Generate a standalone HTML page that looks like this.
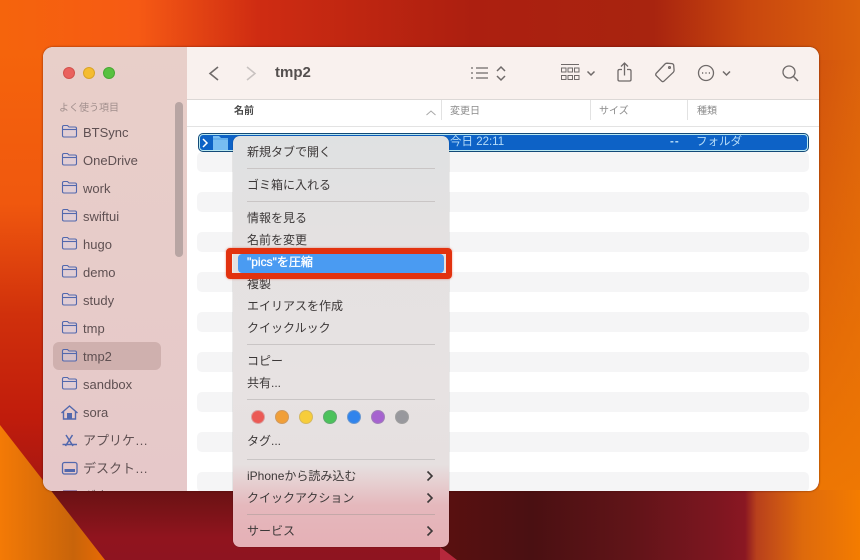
<!DOCTYPE html>
<html lang="ja"><head><meta charset="utf-8"><title>Finder</title>
<style>
*{box-sizing:border-box}
html,body{margin:0;padding:0}
body{width:860px;height:560px;position:relative;overflow:hidden;background:#a81e10;font-family:"Liberation Sans","Noto Sans CJK JP",sans-serif}
.a{position:absolute;white-space:nowrap}
#win{position:absolute;left:43px;top:47px;width:776px;height:444px;border-radius:10px;overflow:hidden;background:#fff;box-shadow:0 0 2px rgba(60,10,0,.6)}
#side{position:absolute;left:0;top:0;width:144px;height:444px;background:linear-gradient(#e8cfc9,#e6c8c9)}
.si{position:absolute;left:40px;font-size:13px;line-height:18px;color:#5f5052;white-space:nowrap}
.st{position:absolute;left:154px;width:612px;height:20px;background:#f5f5f6;border-radius:5px}
.h{position:absolute;top:58px;font-size:10px;line-height:14px;color:#8b8b8b;white-space:nowrap}
.hs{position:absolute;top:53px;width:1px;height:20px;background:#e2e2e2}
#menu{position:absolute;left:233px;top:136px;width:216px;height:411px;border-radius:7px;background:linear-gradient(#dfe1e2 0,#e4e1e1 25%,#e7e2e2 60%,#e6e0e0 80%,#e5b8bc 90%,#e5b0b6 100%);box-shadow:0 0 1px rgba(0,0,0,.45)}
.m{position:absolute;left:14px;font-size:12px;line-height:18px;color:#3c3838;white-space:nowrap}
.sep{position:absolute;left:14px;width:188px;height:1px;background:#c9c5c5}
.dot{position:absolute;top:274px;width:14px;height:14px;border-radius:50%}
.ar{position:absolute;left:193px;width:8px;height:12px}
</style></head><body>
<svg class="a" style="left:0;top:0" width="860" height="560" viewBox="0 0 860 560">
<defs>
<linearGradient id="b" x1="0" y1="0" x2="1" y2="0"><stop offset="0" stop-color="#f5640c"/><stop offset=".16" stop-color="#f65a14"/><stop offset=".3" stop-color="#cf2c12"/><stop offset=".55" stop-color="#ac1f10"/><stop offset=".76" stop-color="#a8240f"/><stop offset=".87" stop-color="#c9470e"/><stop offset="1" stop-color="#dc620c"/></linearGradient>
<linearGradient id="l" x1="0" y1="0" x2="0" y2="1"><stop offset="0" stop-color="#f5640c"/><stop offset=".3" stop-color="#f0580e"/><stop offset=".52" stop-color="#d0300c"/><stop offset=".72" stop-color="#c01c0c"/><stop offset="1" stop-color="#8a1218"/></linearGradient>
<linearGradient id="r" x1="0" y1="0" x2="1" y2="0"><stop offset="0" stop-color="#d2540d"/><stop offset="1" stop-color="#dc620c"/></linearGradient>
<linearGradient id="r2" x1="0" y1="0" x2="0" y2="1"><stop offset="0" stop-color="#f07a02" stop-opacity="0"/><stop offset="1" stop-color="#f07a02" stop-opacity=".9"/></linearGradient>
<linearGradient id="t" x1="0" y1="0" x2="1" y2="0"><stop offset="0" stop-color="#f47a06"/><stop offset=".7" stop-color="#c8640a"/><stop offset="1" stop-color="#e86a04"/></linearGradient>
<linearGradient id="o" x1="0" y1="0" x2="1" y2="0"><stop offset="0" stop-color="#8a1722"/><stop offset=".1" stop-color="#b8401c"/><stop offset=".5" stop-color="#de6a0c"/><stop offset="1" stop-color="#f47c00"/></linearGradient>
<linearGradient id="k" x1="0" y1="0" x2="1" y2="0"><stop offset="0" stop-color="#5a1010"/><stop offset=".3" stop-color="#4a1012"/><stop offset=".62" stop-color="#601418"/><stop offset=".9" stop-color="#7c1620"/><stop offset="1" stop-color="#8a1722"/></linearGradient>
<linearGradient id="q" x1="0" y1="0" x2="0" y2="1"><stop offset="0" stop-color="#651212"/><stop offset=".7" stop-color="#90141e"/><stop offset="1" stop-color="#8e1420"/></linearGradient>
</defs>
<rect width="860" height="60" fill="url(#b)"/>
<rect x="0" y="50" width="50" height="510" fill="url(#l)"/>
<rect x="50" y="485" width="400" height="75" fill="url(#q)"/>
<rect x="440" y="485" width="305" height="75" fill="url(#k)"/>
<rect x="745" y="485" width="115" height="75" fill="url(#o)"/>
<rect x="819" y="60" width="41" height="430" fill="url(#r)"/>
<rect x="819" y="60" width="41" height="430" fill="url(#r2)"/>
<polygon points="0,425 105,560 0,560" fill="url(#t)"/>
<polygon points="440,547 457,560 440,560" fill="#b5283c"/>
</svg>

<div id="win">
<div class="a" style="left:144px;top:0;width:632px;height:53px;background:#f9f1ee;border-bottom:1px solid #dcd8d6"></div>
<div class="a" style="left:144px;top:79px;width:632px;height:1px;background:#e3e3e3"></div>

<div id="side">
<div class="a" style="left:20px;top:20px;width:12px;height:12px;border-radius:50%;background:#ea615d;border:1px solid #d2524c"></div>
<div class="a" style="left:40px;top:20px;width:12px;height:12px;border-radius:50%;background:#f5bc2f;border:1px solid #d9a428"></div>
<div class="a" style="left:60px;top:20px;width:12px;height:12px;border-radius:50%;background:#58c13f;border:1px solid #49a834"></div>
<div class="a" style="left:16px;top:55px;font-size:10px;line-height:14px;color:#a08e8c">よく使う項目</div>
<div class="a" style="left:132px;top:55px;width:8px;height:155px;border-radius:4px;background:#b8a5a3"></div>
<div class="a" style="left:10px;top:295px;width:108px;height:28px;border-radius:6px;background:#cfb0ae"></div>

<svg class="a" style="left:0;top:0" width="144" height="444" fill="none" stroke="#5268ad" stroke-width="1.1">
<defs><g id="f"><path d="M19.500 88.500v-8.500q0-1.500 1.500-1.500h3.500l1.500 1.500h6q1.500 0 1.500 1.500v7q0 1.500-1.500 1.500h-11q-1.500 0-1.500-1.500z" fill="#dcd0e0" fill-opacity=".5"/><path d="M19.500 82.500h14.500"/></g></defs>
<use href="#f"/><use href="#f" y="28"/><use href="#f" y="56"/><use href="#f" y="84"/><use href="#f" y="112"/><use href="#f" y="140"/><use href="#f" y="168"/><use href="#f" y="196"/><use href="#f" y="224"/><use href="#f" y="252"/>
<path d="M18.500 366l8-7 8 7M20.500 364.500v7.500h12v-7.500" stroke-width="1.400"/><rect x="24" y="366" width="5" height="6" fill="#5268ad" stroke="none"/>
<path d="M23 388l7 11M29.500 388l-7 11M19.500 397.500h14.500" stroke-width="1.500"/>
<rect x="19.500" y="415.500" width="14.500" height="11.500" rx="2" stroke-width="1.300"/><rect x="21.500" y="422" width="10.500" height="3" fill="#5268ad" stroke="none"/>
<rect x="20" y="443" width="14" height="6" fill="#9b7fa5" stroke="none"/>
</svg>

<div class="si" style="top:77px">BTSync</div>
<div class="si" style="top:105px">OneDrive</div>
<div class="si" style="top:133px">work</div>
<div class="si" style="top:161px">swiftui</div>
<div class="si" style="top:189px">hugo</div>
<div class="si" style="top:217px">demo</div>
<div class="si" style="top:245px">study</div>
<div class="si" style="top:273px">tmp</div>
<div class="si" style="top:301px">tmp2</div>
<div class="si" style="top:329px">sandbox</div>
<div class="si" style="top:357px">sora</div>
<div class="si" style="top:385px">アプリケ…</div>
<div class="si" style="top:413px">デスクト…</div>
<div class="si" style="top:441px">ダウ…</div>
</div>

<div class="a" style="left:232px;top:16px;font-size:15px;line-height:20px;font-weight:bold;color:#544f4e">tmp2</div>

<svg class="a" style="left:144px;top:0" width="632" height="53" fill="none" stroke="#6f6a69" stroke-width="1.300">
<path d="M31 20l-8 6.500 8 6.500" stroke-width="1.600"/>
<path d="M60 20l8 6.500-8 6.500" stroke="#c8c2c0" stroke-width="1.500"/>
<path d="M289 21h12M289 26h12M289 31h12"/>
<path d="M284 21h2M284 26h2M284 31h2"/>
<path d="M310 24l4-4 4 4M310 29l4 4 4-4" stroke-width="1.500"/>
<path d="M374 17.500h18" stroke-width="1"/>
<rect x="374.500" y="21" width="4.500" height="4" stroke-width="1"/><rect x="381" y="21" width="4.500" height="4" stroke-width="1"/><rect x="387.500" y="21" width="4.500" height="4" stroke-width="1"/>
<rect x="374.500" y="28.500" width="4.500" height="4" stroke-width="1"/><rect x="381" y="28.500" width="4.500" height="4" stroke-width="1"/><rect x="387.500" y="28.500" width="4.500" height="4" stroke-width="1"/>
<path d="M400.500 24.500l3.500 3.500 3.500-3.500" stroke-width="1.500"/>
<path d="M435 22.500h-2.500q-1.500 0-1.500 1.500v8.500q0 1.500 1.500 1.500h10q1.500 0 1.500-1.500v-8.500q0-1.500-1.500-1.500h-2.500M437.500 28.500v-12.500M434 19.500l3.500-3.500 3.500 3.500"/>
<path d="M469 26.500l9-9.500q.8-.8 2-.8l5 .4q1.500.2 1.700 1.700l.4 5q0 1.200-.8 2l-9.500 9q-1 .8-2 0l-5.500-5.500q-1-1-.3-2.300z"/><circle cx="482.500" cy="20.500" r=".9"/>
<circle cx="519" cy="26" r="7.500"/>
<path d="M515 26h1.200M518.400 26h1.200M521.800 26h1.200" stroke-width="1.500"/>
<path d="M536 24.500l3.500 3.500 3.500-3.500" stroke-width="1.500"/>
<circle cx="602" cy="25" r="6" stroke-width="1.300"/><path d="M606.500 29.500l4.500 4.500" stroke-width="1.500"/>
</svg>

<div class="h" style="left:191px;color:#4a4a4a;font-weight:bold">名前</div>
<svg class="a" style="left:382px;top:62px" width="12" height="8" fill="none" stroke="#a8a8a8" stroke-width="1"><path d="M1.500 6l4.500-4 4.500 4"/></svg>
<div class="hs" style="left:398px"></div>
<div class="h" style="left:407px">変更日</div>
<div class="hs" style="left:547px"></div>
<div class="h" style="left:556px">サイズ</div>
<div class="hs" style="left:644px"></div>
<div class="h" style="left:654px">種類</div>

<div class="st" style="top:105px"></div><div class="st" style="top:145px"></div><div class="st" style="top:185px"></div><div class="st" style="top:225px"></div><div class="st" style="top:265px"></div><div class="st" style="top:305px"></div><div class="st" style="top:345px"></div><div class="st" style="top:385px"></div><div class="st" style="top:425px"></div>

<div class="a" style="left:155px;top:86px;width:611px;height:19px;background:#0d62c6;border:1px solid #134a78;outline:1px solid #b9e8f0;outline-offset:-2px;border-radius:5px"></div>
<svg class="a" style="left:158px;top:89px" width="34" height="14"><path d="M2 3l4 4-4 4" fill="none" stroke="#fff" stroke-width="1.500"/><path d="M12 0h6l2 2h7v12h-15z" fill="#78bdf2"/><path d="M12 3h15" stroke="#4f9fe0"/></svg>
<div class="a" style="left:407px;top:87px;font-size:11.500px;line-height:16px;color:#b5dcf8">今日 22:11</div>
<div class="a" style="left:627px;top:87px;font-size:11.500px;line-height:16px;color:#b5dcf8;font-weight:bold;letter-spacing:1px">--</div>
<div class="a" style="left:653px;top:87px;font-size:11.500px;line-height:16px;color:#b5dcf8">フォルダ</div>
</div>

<div id="menu">
<div class="m" style="top:7px">新規タブで開く</div>
<div class="sep" style="top:32px"></div>
<div class="m" style="top:40px">ゴミ箱に入れる</div>
<div class="sep" style="top:65px"></div>
<div class="m" style="top:73px">情報を見る</div>
<div class="m" style="top:95px">名前を変更</div>
<div class="a" style="left:5px;top:118px;width:206px;height:19px;background:#4a9bf2;border-radius:4px"></div>
<div class="m" style="top:117px;color:#fff;-webkit-text-stroke:.3px #fff">"pics"を圧縮</div>
<div class="m" style="top:139px">複製</div>
<div class="m" style="top:161px">エイリアスを作成</div>
<div class="m" style="top:183px">クイックルック</div>
<div class="sep" style="top:208px"></div>
<div class="m" style="top:216px">コピー</div>
<div class="m" style="top:238px">共有...</div>
<div class="sep" style="top:263px"></div>
<div class="dot" style="left:18px;background:#eb5a55;border:1px solid #d9a0a0"></div>
<div class="dot" style="left:42px;background:#f19f38;border:1px solid #cf9a60"></div>
<div class="dot" style="left:66px;background:#f7cd3a;border:1px solid #d5b860"></div>
<div class="dot" style="left:90px;background:#4cc25b;border:1px solid #60a870"></div>
<div class="dot" style="left:114px;background:#3184ec;border:1px solid #6a98d0"></div>
<div class="dot" style="left:138px;background:#a663cf;border:1px solid #a080b8"></div>
<div class="dot" style="left:162px;background:#98989d;border:1px solid #a0a0a0"></div>
<div class="m" style="top:296px">タグ...</div>
<div class="sep" style="top:323px"></div>
<div class="m" style="top:331px">iPhoneから読み込む</div>
<svg class="ar" style="top:334px" viewBox="0 0 8 12"><path d="M1.500 1.500l4.500 4.500-4.500 4.500" fill="none" stroke="#3c3838" stroke-width="1.600"/></svg>
<div class="m" style="top:353px">クイックアクション</div>
<svg class="ar" style="top:356px" viewBox="0 0 8 12"><path d="M1.500 1.500l4.500 4.500-4.500 4.500" fill="none" stroke="#3c3838" stroke-width="1.600"/></svg>
<div class="sep" style="top:378px;background:#c4a8a8"></div>
<div class="m" style="top:386px">サービス</div>
<svg class="ar" style="top:389px" viewBox="0 0 8 12"><path d="M1.500 1.500l4.500 4.500-4.500 4.500" fill="none" stroke="#3c3838" stroke-width="1.600"/></svg>
</div>

<div class="a" style="left:226px;top:248px;width:226px;height:31px;border:6px solid #e2320f;border-top-width:6.500px;border-radius:4px;box-shadow:0 0 2px rgba(226,50,15,.5)"></div>
</body></html>
